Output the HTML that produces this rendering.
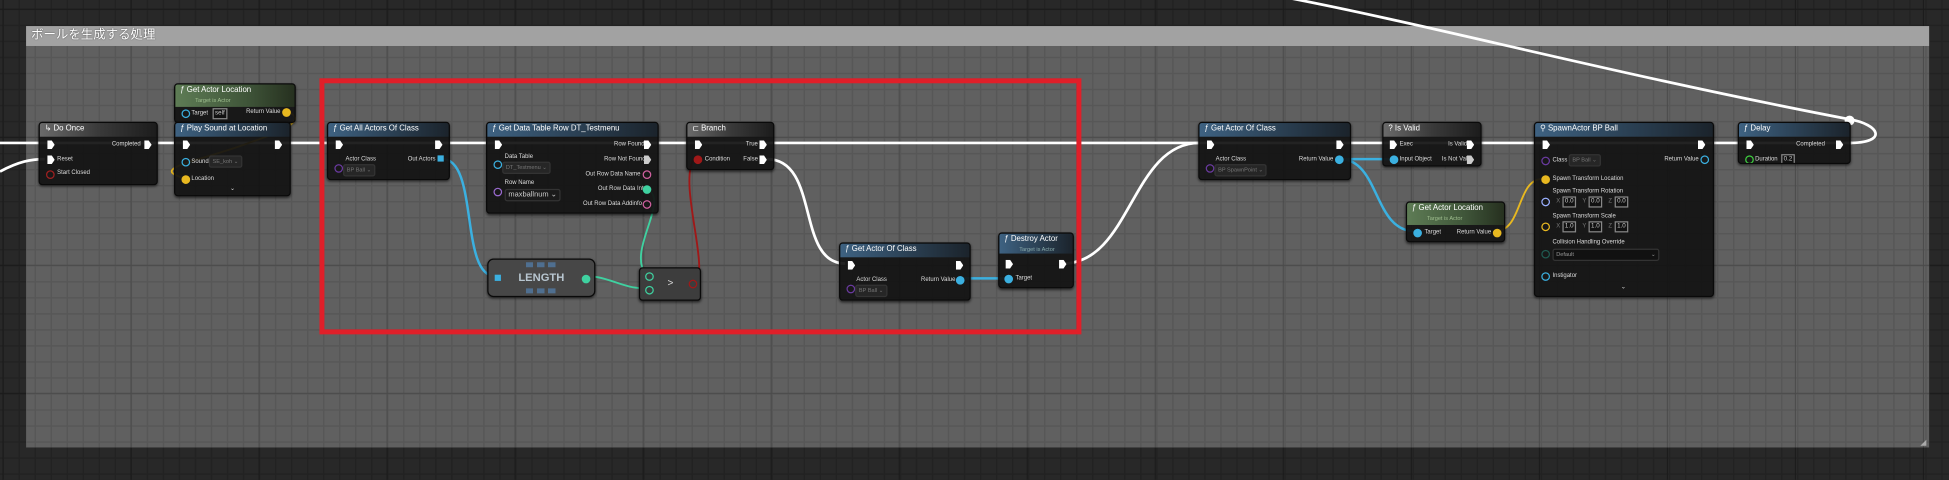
<!DOCTYPE html>
<html><head><meta charset="utf-8"><style>
html,body{margin:0;padding:0;width:1949px;height:480px;overflow:hidden;background:#262626}
#w{position:absolute;left:0;top:0;width:1568px;height:386px;transform:scale(1.24298);transform-origin:0 0;font-family:"Liberation Sans","Noto Sans CJK JP",sans-serif;color:#ddd;
background-color:#282828;
background-image:linear-gradient(90deg,#1a1a1a 1px,transparent 1px),linear-gradient(#1a1a1a 1px,transparent 1px),linear-gradient(90deg,#222 1px,transparent 1px),linear-gradient(#222 1px,transparent 1px);
background-size:103px 103px,103px 103px,12.9px 12.9px,12.9px 12.9px;background-position:2px 7px}
.cm{position:absolute;left:21px;top:21px;width:1531px;height:339px;background-color:#606060;
background-image:linear-gradient(90deg,#4a4a4a 1px,transparent 1px),linear-gradient(#4a4a4a 1px,transparent 1px),linear-gradient(90deg,#575757 1px,transparent 1px),linear-gradient(#575757 1px,transparent 1px);
background-size:103px 103px,103px 103px,12.9px 12.9px,12.9px 12.9px;background-position:-19px -14px}
.ct{position:absolute;left:21px;top:21px;width:1531px;height:16px;background:#a2a2a2;color:#fff;font-size:10px;line-height:16px;padding-left:4px;box-sizing:border-box;text-shadow:0 0 1px #333}
.n{position:absolute;background:rgba(18,18,18,.93);border:1px solid #0a0a0a;border-radius:3px;box-shadow:0 1px 2px rgba(0,0,0,.6);font-size:5px;overflow:hidden}
.h{height:11px;line-height:10px;color:#fff;font-size:6.3px;padding-left:4px;white-space:nowrap}
.hb{background:linear-gradient(90deg,#3e6282,#2a3f52 55%,#1b232b)}
.hg{background:linear-gradient(90deg,#5e7c55,#3f5539 60%,#26301f);height:18px}
.hk{background:linear-gradient(90deg,#6a6a6a,#3a3a3a 50%,#1c1c1c)}
.sub{font-size:4.5px;color:#9fbf8f;padding-left:12px;line-height:6px}
.t{position:absolute;font-size:4.8px;color:#ddd;white-space:nowrap}
.ex{position:absolute;width:6px;height:7px;background:#fff;clip-path:polygon(0 0,60% 0,100% 50%,60% 100%,0 100%)}
.p{position:absolute;width:5px;height:5px;border-radius:50%;border:1px solid}
.bx{position:absolute;border:1px solid #888;font-size:5px;color:#ccc;padding:0 1px;line-height:7px;background:#111}
.dd{position:absolute;background:#262626;border:1px solid #333;border-radius:2px;font-size:4.5px;color:#777;padding:0 2px;line-height:8px}
</style></head><body><div id="w">
<div class="cm"></div>
<div class="ct">ボールを生成する処理</div>

<svg width="1568" height="386" style="position:absolute;left:0;top:0" fill="none">
<g stroke="#fff" stroke-width="2.2">
<path d="M0 115 H1490"/>
<path d="M0 138 C15 130 25 128 36 128"/>
<path d="M617 128 C660 128 640 212 680 212"/>
<path d="M855 212 C910 212 910 115 965 115"/>
<path d="M1487 115 C1520 115 1512 100 1488 96 C1300 60 1150 20 1035 -2"/>
</g>
<g stroke="#3bb0e0" stroke-width="2">
<path d="M356 128 C385 128 370 222 398 222"/>
<path d="M1078 128 H1119"/>
<path d="M1078 128 C1110 128 1105 186 1138 186"/>
<path d="M772 224 H810"/>
</g>
<g stroke="#3fd1a0" stroke-width="1.5">
<path d="M520 152 C540 160 505 200 519 220"/>
<path d="M470 222 C490 222 500 232 519 232"/>
</g>
<path d="M556 227 C575 227 545 150 558 128" stroke="#a01818" stroke-width="1.5"/>
<g stroke="#e8b820" stroke-width="1.5">
<path d="M228 89 C250 95 230 105 200 115 C160 130 120 135 147 143"/>
<path d="M1203 186 C1225 186 1220 144 1241 144"/>
</g>
<rect x="259" y="65" width="609" height="202" stroke="#e01f29" stroke-width="4"/>
<circle cx="1488" cy="97" r="4" fill="#fff"/>
</svg>

<div class="n" style="left:31px;top:98px;width:94px;height:49px">
<div class="h hk">↳ Do Once</div>
<div class="ex" style="left:6px;top:14px"></div><div class="t" style="left:58px;top:15px">Completed</div><div class="ex" style="left:84px;top:14px"></div>
<div class="ex" style="left:6px;top:26px"></div><div class="t" style="left:14px;top:27px">Reset</div>
<div class="p" style="left:5px;top:38px;border-color:#a02020"></div><div class="t" style="left:14px;top:38px">Start Closed</div>
</div>
<div class="n" style="left:140px;top:67px;width:96px;height:30px">
<div class="h hg">ƒ Get Actor Location<div class="sub">Target is Actor</div></div>
<div class="p" style="left:5px;top:20px;border-color:#3bb0e0"></div><div class="t" style="left:13px;top:21px">Target</div><div class="bx" style="left:30px;top:19px">self</div>
<div class="t" style="left:57px;top:20px">Return Value</div><div class="p" style="left:86px;top:19px;background:#e8b820;border-color:#e8b820"></div>
</div>
<div class="n" style="left:140px;top:98px;width:92px;height:58px">
<div class="h hb">ƒ Play Sound at Location</div>
<div class="ex" style="left:6px;top:14px"></div><div class="ex" style="left:80px;top:14px"></div>
<div class="p" style="left:5px;top:28px;border-color:#3bb0e0"></div><div class="t" style="left:13px;top:29px">Sound</div><div class="dd" style="left:27px;top:26px">SE_koh ⌄</div>
<div class="p" style="left:5px;top:42px;background:#e8b820;border-color:#e8b820"></div><div class="t" style="left:13px;top:43px">Location</div>
<div class="t" style="left:44px;top:51px">⌄</div>
</div>
<div class="n" style="left:263px;top:98px;width:97px;height:45px">
<div class="h hb">ƒ Get All Actors Of Class</div>
<div class="ex" style="left:6px;top:14px"></div><div class="ex" style="left:86px;top:14px"></div>
<div class="p" style="left:5px;top:33px;border-color:#6a3aa0"></div><div class="t" style="left:14px;top:27px">Actor Class</div><div class="dd" style="left:12px;top:33px">BP Ball ⌄</div>
<div class="t" style="left:64px;top:27px">Out Actors</div><div style="position:absolute;left:88px;top:26px;width:5px;height:5px;background:#3bb0e0"></div>
</div>
<div class="n" style="left:391px;top:98px;width:137px;height:72px">
<div class="h hb">ƒ Get Data Table Row DT_Testmenu</div>
<div class="ex" style="left:6px;top:14px"></div><div class="t" style="left:102px;top:15px">Row Found</div><div class="ex" style="left:126px;top:14px"></div>
<div class="t" style="left:94px;top:27px">Row Not Found</div><div class="ex" style="left:126px;top:26px;background:#ccc"></div>
<div class="p" style="left:5px;top:30px;border-color:#3bb0e0"></div><div class="t" style="left:14px;top:25px">Data Table</div><div class="dd" style="left:12px;top:31px">DT_Testmenu ⌄</div>
<div class="t" style="left:79px;top:39px">Out Row Data Name</div><div class="p" style="left:125px;top:38px;border-color:#d060a0"></div>
<div class="p" style="left:5px;top:52px;border-color:#9a6ad0"></div><div class="t" style="left:14px;top:46px">Row Name</div><div class="dd" style="left:14px;top:53px;color:#ccc;font-size:6px;background:#1a1a1a">maxballnum ⌄</div>
<div class="t" style="left:89px;top:51px">Out Row Data Int</div><div class="p" style="left:125px;top:50px;background:#3fd1a0;border-color:#3fd1a0"></div>
<div class="t" style="left:77px;top:63px">Out Row Data Addinfo</div><div class="p" style="left:125px;top:62px;border-color:#d060a0"></div>
</div>
<div class="n" style="left:552px;top:98px;width:69px;height:37px">
<div class="h hk">⊏ Branch</div>
<div class="ex" style="left:6px;top:14px"></div><div class="t" style="left:47px;top:15px">True</div><div class="ex" style="left:58px;top:14px"></div>
<div class="p" style="left:5px;top:26px;background:#a01818;border-color:#a01818"></div><div class="t" style="left:14px;top:27px">Condition</div><div class="t" style="left:45px;top:27px">False</div><div class="ex" style="left:58px;top:26px"></div>
</div>
<div class="n" style="left:392px;top:208px;width:85px;height:29px;background:#474747;border-radius:5px">
<div style="position:absolute;left:0;width:85px;top:9px;text-align:center;font-size:9px;font-weight:bold;color:#b8c6d0">LENGTH</div>
<div style="position:absolute;left:30px;top:2px;width:26px;height:4px;background:repeating-linear-gradient(90deg,#4f6f90 0 6px,transparent 6px 9px)"></div>
<div style="position:absolute;left:30px;top:23px;width:26px;height:4px;background:repeating-linear-gradient(90deg,#4f6f90 0 6px,transparent 6px 9px)"></div>
<div style="position:absolute;left:5px;top:12px;width:5px;height:5px;background:#3bb0e0"></div>
<div class="p" style="left:75px;top:12px;background:#3fd1a0;border-color:#3fd1a0"></div>
</div>
<div class="n" style="left:514px;top:215px;width:48px;height:25px;background:#3d3d3d">
<div class="p" style="left:4px;top:3px;border-color:#3fd1a0"></div>
<div class="p" style="left:4px;top:14px;border-color:#3fd1a0"></div>
<div class="t" style="left:22px;top:7px;font-size:8px">&gt;</div>
<div class="p" style="left:39px;top:9px;border-color:#a01818"></div>
</div>
<div class="n" style="left:675px;top:195px;width:104px;height:45px">
<div class="h hb">ƒ Get Actor Of Class</div>
<div class="ex" style="left:6px;top:14px"></div><div class="ex" style="left:93px;top:14px"></div>
<div class="p" style="left:5px;top:33px;border-color:#6a3aa0"></div><div class="t" style="left:13px;top:27px">Actor Class</div><div class="dd" style="left:12px;top:33px">BP Ball ⌄</div>
<div class="t" style="left:65px;top:27px">Return Value</div><div class="p" style="left:93px;top:26px;background:#3bb0e0;border-color:#3bb0e0"></div>
</div>
<div class="n" style="left:803px;top:187px;width:59px;height:43px">
<div class="h hb" style="height:16px">ƒ Destroy Actor<div class="sub" style="color:#8aa">Target is Actor</div></div>
<div class="ex" style="left:5px;top:21px"></div><div class="ex" style="left:48px;top:21px"></div>
<div class="p" style="left:4px;top:33px;background:#3bb0e0;border-color:#3bb0e0"></div><div class="t" style="left:13px;top:34px">Target</div>
</div>
<div class="n" style="left:964px;top:98px;width:121px;height:45px">
<div class="h hb">ƒ Get Actor Of Class</div>
<div class="ex" style="left:6px;top:14px"></div><div class="ex" style="left:110px;top:14px"></div>
<div class="p" style="left:5px;top:33px;border-color:#6a3aa0"></div><div class="t" style="left:13px;top:27px">Actor Class</div><div class="dd" style="left:12px;top:33px">BP SpawnPoint ⌄</div>
<div class="t" style="left:80px;top:27px">Return Value</div><div class="p" style="left:109px;top:26px;background:#3bb0e0;border-color:#3bb0e0"></div>
</div>
<div class="n" style="left:1112px;top:98px;width:78px;height:34px">
<div class="h hk">? Is Valid</div>
<div class="ex" style="left:5px;top:14px"></div><div class="t" style="left:13px;top:15px">Exec</div><div class="t" style="left:52px;top:15px">Is Valid</div><div class="ex" style="left:67px;top:14px"></div>
<div class="p" style="left:5px;top:26px;background:#3bb0e0;border-color:#3bb0e0"></div><div class="t" style="left:13px;top:27px">Input Object</div><div class="t" style="left:47px;top:27px">Is Not Valid</div><div class="ex" style="left:67px;top:26px;background:#ccc"></div>
</div>
<div class="n" style="left:1131px;top:162px;width:78px;height:31px">
<div class="h hg">ƒ Get Actor Location<div class="sub">Target is Actor</div></div>
<div class="p" style="left:5px;top:21px;background:#3bb0e0;border-color:#3bb0e0"></div><div class="t" style="left:14px;top:22px">Target</div>
<div class="t" style="left:40px;top:22px">Return Value</div><div class="p" style="left:69px;top:21px;background:#e8b820;border-color:#e8b820"></div>
</div>
<div class="n" style="left:1234px;top:98px;width:143px;height:139px">
<div class="h hb">⚲ SpawnActor BP Ball</div>
<div class="ex" style="left:6px;top:14px"></div><div class="ex" style="left:131px;top:14px"></div>
<div class="p" style="left:5px;top:27px;border-color:#6a3aa0"></div><div class="t" style="left:14px;top:28px">Class</div><div class="dd" style="left:27px;top:25px">BP Ball ⌄</div>
<div class="t" style="left:104px;top:27px">Return Value</div><div class="p" style="left:133px;top:26px;border-color:#3bb0e0"></div>
<div class="p" style="left:5px;top:42px;background:#e8b820;border-color:#e8b820"></div><div class="t" style="left:14px;top:43px">Spawn Transform Location</div>
<div class="p" style="left:5px;top:60px;border-color:#9ab0ff"></div><div class="t" style="left:14px;top:53px">Spawn Transform Rotation</div>
<div class="t" style="left:17px;top:61px;color:#777">X</div><div class="bx" style="left:22px;top:59px">0.0</div><div class="t" style="left:38px;top:61px;color:#777">Y</div><div class="bx" style="left:43px;top:59px">0.0</div><div class="t" style="left:59px;top:61px;color:#777">Z</div><div class="bx" style="left:64px;top:59px">0.0</div>
<div class="p" style="left:5px;top:80px;border-color:#e8b820"></div><div class="t" style="left:14px;top:73px">Spawn Transform Scale</div>
<div class="t" style="left:17px;top:81px;color:#777">X</div><div class="bx" style="left:22px;top:79px">1.0</div><div class="t" style="left:38px;top:81px;color:#777">Y</div><div class="bx" style="left:43px;top:79px">1.0</div><div class="t" style="left:59px;top:81px;color:#777">Z</div><div class="bx" style="left:64px;top:79px">1.0</div>
<div class="p" style="left:5px;top:102px;border-color:#1f5a50"></div><div class="t" style="left:14px;top:94px">Collision Handling Override</div>
<div class="dd" style="left:14px;top:101px;width:80px;background:#111;color:#999">Default<span style="float:right">⌄</span></div>
<div class="p" style="left:5px;top:120px;border-color:#3bb0e0"></div><div class="t" style="left:14px;top:121px">Instigator</div>
<div class="t" style="left:69px;top:130px">⌄</div>
</div>
<div class="n" style="left:1398px;top:98px;width:89px;height:32px">
<div class="h hb">ƒ Delay</div>
<div class="ex" style="left:6px;top:14px"></div><div class="t" style="left:46px;top:15px">Completed</div><div class="ex" style="left:78px;top:14px"></div>
<div class="p" style="left:5px;top:26px;border-color:#3fd040"></div><div class="t" style="left:13px;top:27px">Duration</div><div class="bx" style="left:34px;top:25px">0.2</div>
</div>
<div class="t" style="left:1545px;top:353px;color:#aaa">◢</div>
</div></body></html>
